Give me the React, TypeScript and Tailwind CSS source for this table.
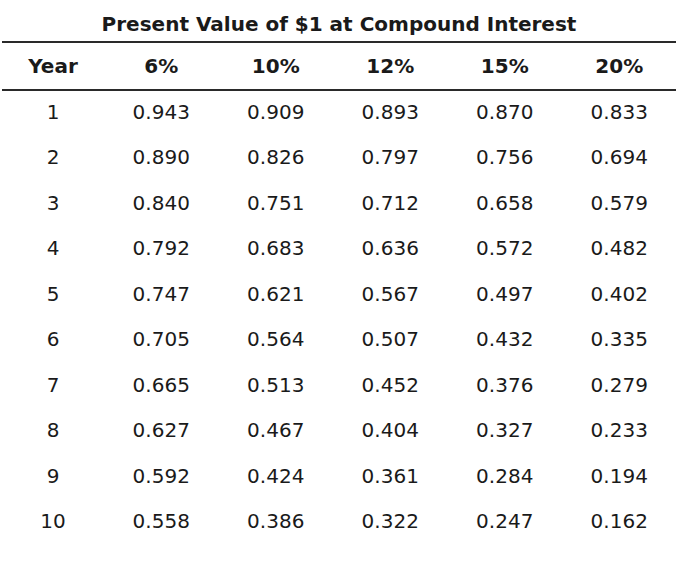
import React from "react";

const rates = ["6%", "10%", "12%", "15%", "20%"];
const rows: [string, string[]][] = [
  ["1", ["0.943", "0.909", "0.893", "0.870", "0.833"]],
  ["2", ["0.890", "0.826", "0.797", "0.756", "0.694"]],
  ["3", ["0.840", "0.751", "0.712", "0.658", "0.579"]],
  ["4", ["0.792", "0.683", "0.636", "0.572", "0.482"]],
  ["5", ["0.747", "0.621", "0.567", "0.497", "0.402"]],
  ["6", ["0.705", "0.564", "0.507", "0.432", "0.335"]],
  ["7", ["0.665", "0.513", "0.452", "0.376", "0.279"]],
  ["8", ["0.627", "0.467", "0.404", "0.327", "0.233"]],
  ["9", ["0.592", "0.424", "0.361", "0.284", "0.194"]],
  ["10", ["0.558", "0.386", "0.322", "0.247", "0.162"]],
];

export default function App() {
  return (
    <div
      className="w-[700px] h-[567px] bg-white text-[#1a1a1a] overflow-hidden"
      style={{ fontFamily: '"DejaVu Sans", Verdana, sans-serif' }}
    >
      <div className="w-[674px] ml-[2px]">
        <div className="pt-[11px] pb-[4px] text-center text-[20px] leading-[26px] font-bold">
          Present Value of $1 at Compound Interest
        </div>
        <div className="grid grid-cols-[102px_repeat(5,114.5px)] border-t-2 border-b-2 border-[#2a2a2a] h-[50px] items-center text-[20px] font-bold">
          <div className="text-center">Year</div>
          {rates.map((r) => (
            <div key={r} className="text-center">
              {r}
            </div>
          ))}
        </div>
        <div className="-mt-[2px]">
          {rows.map(([y, vals]) => (
            <div
              key={y}
              className="grid grid-cols-[102px_repeat(5,114.5px)] h-[45.5px] items-center text-[20px]"
            >
              <div className="text-center">{y}</div>
              {vals.map((v, i) => (
                <div key={i} className="text-center">
                  {v}
                </div>
              ))}
            </div>
          ))}
        </div>
      </div>
    </div>
  );
}
